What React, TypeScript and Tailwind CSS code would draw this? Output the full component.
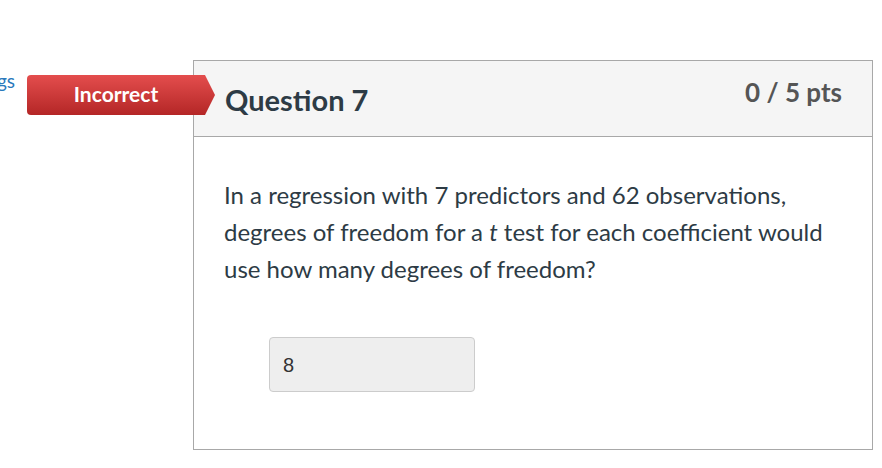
import React from "react";

export default function App() {
  return (
    <div
      className="w-[882px] h-[468px] bg-white overflow-hidden"
      style={{ fontFamily: "Lato, 'Noto Sans', sans-serif" }}
    >
      <div className="flex items-start pt-[60px]">
        <div className="relative w-[193px] shrink-0 h-[60px]">
          <div className="absolute left-0 top-[9px] w-[15px] overflow-hidden flex justify-end">
            <span className="whitespace-nowrap text-[19px] leading-[24px] text-[#2b7abc]">Settings</span>
          </div>
          <div
            className="absolute left-[27px] top-[15px] w-[188px] h-[40px] rounded-l-[4px] bg-gradient-to-b from-[#e44d4d] to-[#b42626] flex items-center"
            style={{ clipPath: "polygon(0 0, 178px 0, 100% 50%, 178px 100%, 0 100%)" }}
          >
            <span className="w-[178px] text-center text-white font-bold text-[21px] leading-none -mt-[3px]">
              Incorrect
            </span>
          </div>
        </div>
        <div className="w-[680px] h-[390px] border border-[#a8a8a8] flex flex-col">
          <div className="h-[76px] bg-[#f5f5f5] border-b border-[#a8a8a8] flex justify-between items-start pl-[31px] pr-[30px]">
            <h2 className="text-[#2d3b45] font-bold text-[29px] leading-[32px] mt-[23px]">Question 7</h2>
            <div className="text-[#555555] font-bold text-[26px] leading-[30px] mt-[16px]">0 / 5 pts</div>
          </div>
          <div className="pl-[30px] pt-[39px]">
            <p className="text-[#2d3b45] text-[24px] leading-[37px]">
              In a regression with 7 predictors and 62 observations,
              <br />
              degrees of freedom for a <i>t</i> test for each coefficient would
              <br />
              use how many degrees of freedom?
            </p>
            <div className="ml-[45px] mt-[50px] w-[206px] h-[55px] bg-[#eeeeee] border border-[#cccccc] rounded-[4px] flex items-center pl-[13px]">
              <span
                className="text-[#333333] text-[20px]"
                style={{ fontFamily: "'Liberation Sans', Arial, sans-serif" }}
              >
                8
              </span>
            </div>
          </div>
        </div>
      </div>
    </div>
  );
}
